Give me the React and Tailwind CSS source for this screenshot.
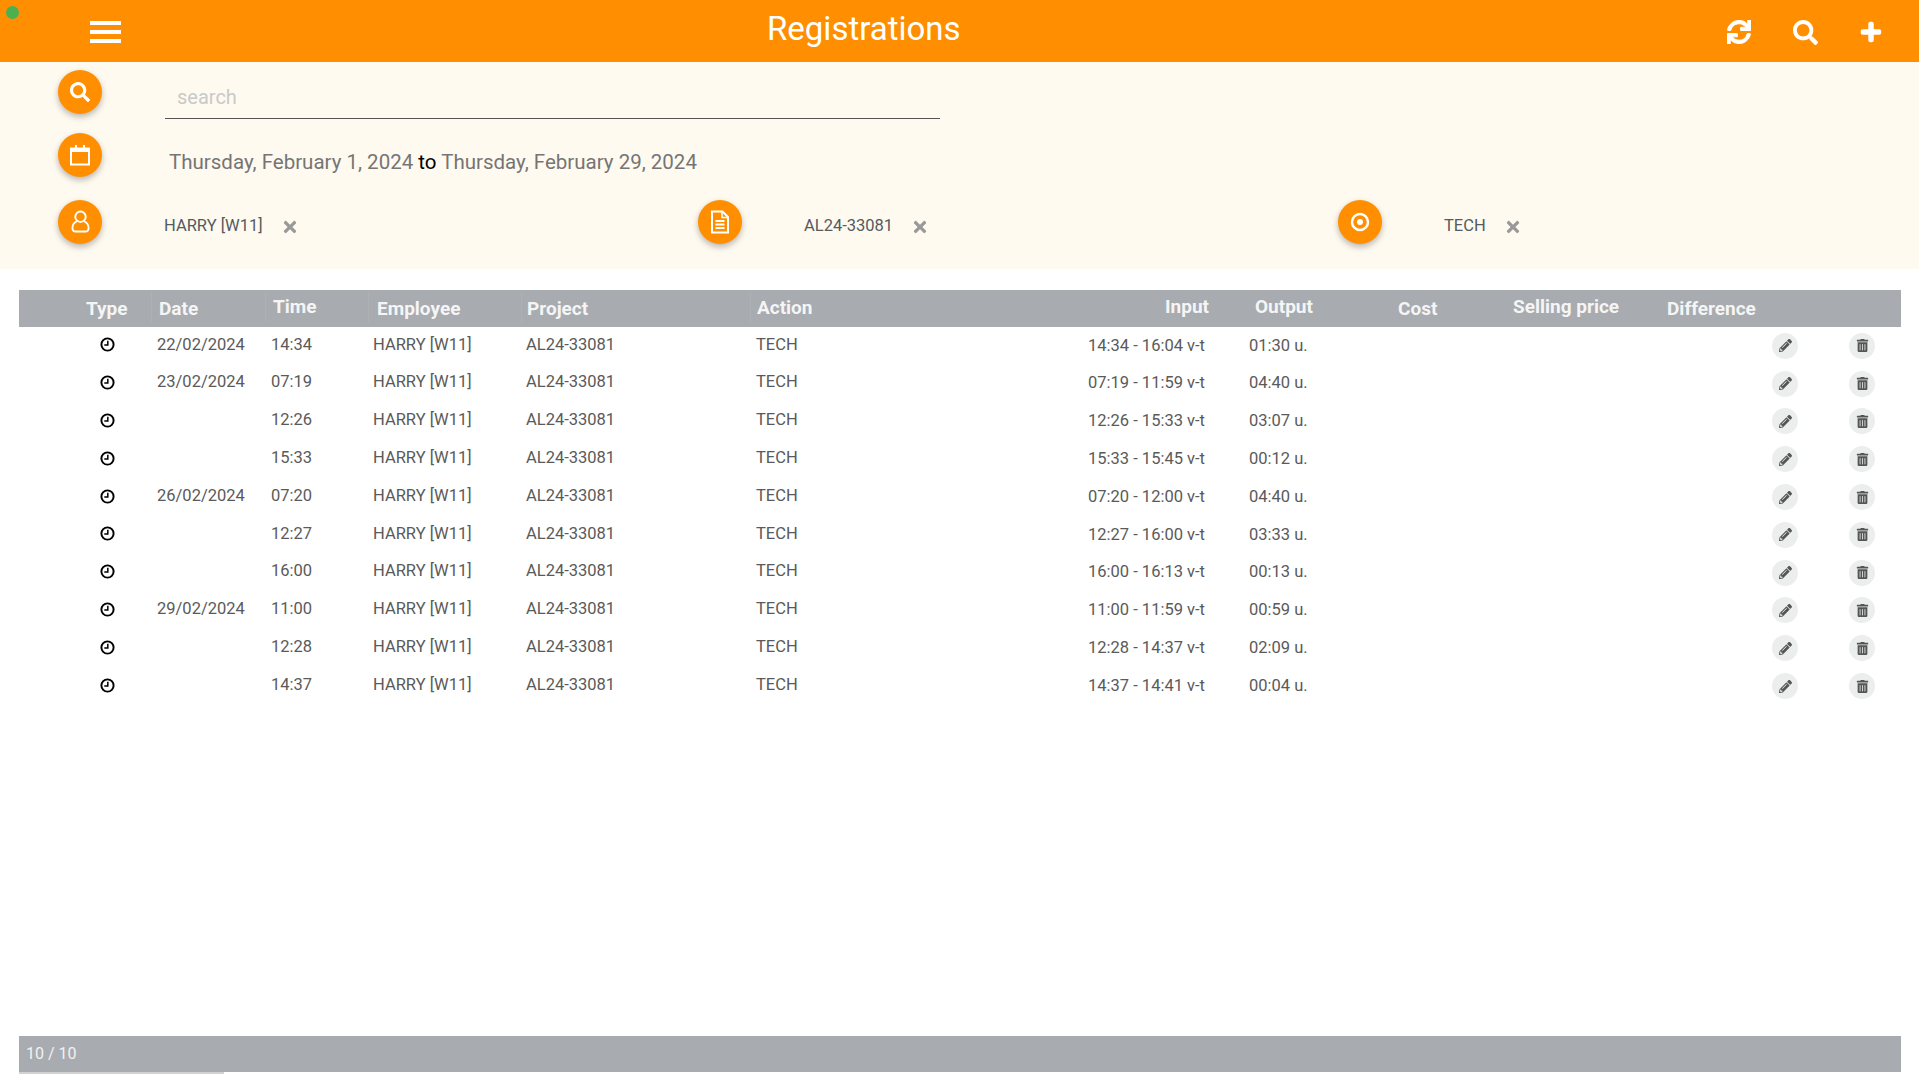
import React from 'react';
import { FaSync, FaSearch, FaPlus, FaTimes, FaPencilAlt, FaTrashAlt } from 'react-icons/fa';

const ROWS = [
    { date: '22/02/2024', time: '14:34', input: '14:34 - 16:04 v-t', output: '01:30 u.' },
    { date: '23/02/2024', time: '07:19', input: '07:19 - 11:59 v-t', output: '04:40 u.' },
    { date: '', time: '12:26', input: '12:26 - 15:33 v-t', output: '03:07 u.' },
    { date: '', time: '15:33', input: '15:33 - 15:45 v-t', output: '00:12 u.' },
    { date: '26/02/2024', time: '07:20', input: '07:20 - 12:00 v-t', output: '04:40 u.' },
    { date: '', time: '12:27', input: '12:27 - 16:00 v-t', output: '03:33 u.' },
    { date: '', time: '16:00', input: '16:00 - 16:13 v-t', output: '00:13 u.' },
    { date: '29/02/2024', time: '11:00', input: '11:00 - 11:59 v-t', output: '00:59 u.' },
    { date: '', time: '12:28', input: '12:28 - 14:37 v-t', output: '02:09 u.' },
    { date: '', time: '14:37', input: '14:37 - 14:41 v-t', output: '00:04 u.' },
];

const COLUMNS = 'grid grid-cols-[132px_114px_103px_153px_229px_250px_212px_168px_120px_150px_110px_60px_81px]';

// Round orange button left of each filter
const FilterBadge = ({ children }) => (
    <div className="flex h-[44px] w-[44px] shrink-0 items-center justify-center rounded-full bg-[#ff8f00] text-white shadow-[0_3px_6px_rgba(0,0,0,0.28)]">
        {children}
    </div>
);

const CalendarIcon = () => (
    <svg width="22" height="22" viewBox="0 0 22 22" fill="none" stroke="white" strokeWidth="2">
        <rect x="2" y="4.5" width="18" height="16" />
        <path d="M2 6.5h18" strokeWidth="3" />
        <path d="M7 1v4M15 1v4" />
    </svg>
);

const UserIcon = () => (
    <svg width="19" height="23" viewBox="0 0 20 24" fill="none" stroke="white" strokeWidth="2">
        <circle cx="10" cy="7" r="5.5" />
        <path d="M6.5 11.5C3.5 13 1.5 15 1.5 18.5c0 2.5 1 4 3.5 4h10c2.5 0 3.5-1.5 3.5-4 0-3.5-2-5.5-5-7" />
    </svg>
);

const FileIcon = () => (
    <svg width="20" height="24" viewBox="0 0 20 24" fill="none" stroke="white" strokeWidth="2">
        <path d="M2 1.5h10.5l5.5 5.5v15.5H2z" />
        <path d="M12 1.5v6h6" strokeWidth="1.5" />
        <path d="M5.5 11h9M5.5 14.5h9M5.5 18h9" />
    </svg>
);

const TargetIcon = () => (
    <svg width="20" height="20" viewBox="0 0 20 20" fill="none" stroke="white">
        <circle cx="10" cy="10" r="8" strokeWidth="2.5" />
        <circle cx="10" cy="10" r="3" fill="white" stroke="none" />
    </svg>
);

const ClockIcon = () => (
    <svg width="15" height="15" viewBox="0 0 14 14" fill="none" stroke="black">
        <circle cx="7" cy="7" r="5.7" strokeWidth="1.8" />
        <path d="M7.3 3.5v4H4" strokeWidth="1.4" />
    </svg>
);

const Chip = ({ label }) => (
    <div className="flex items-center pt-[10px] text-[16.5px] text-[#555b61]">
        <span>{label}</span>
        <FaTimes size={18} className="ml-[18px] text-[#999999]" />
    </div>
);

const FilterChip = ({ icon, label }) => (
    <div className="flex items-center pl-[58px]">
        <FilterBadge>{icon}</FilterBadge>
        <div className="ml-[62px]">
            <Chip label={label} />
        </div>
    </div>
);

const RoundButton = ({ children }) => (
    <div className="flex h-[26px] w-[26px] items-center justify-center rounded-full bg-[#eceded] text-[#555555]">
        {children}
    </div>
);

const App = () => {
    return (
        <div className="relative flex h-screen flex-col overflow-hidden bg-white font-[Roboto,sans-serif]">
            <div className="absolute left-[6px] top-[6px] h-[13px] w-[13px] rounded-full bg-[#4caf50]" />

            {/* Top bar */}
            <header className="flex h-[62px] shrink-0 items-center bg-[#ff8f00] text-white">
                <div className="ml-[90px] flex w-[31px] flex-col gap-[5px] pt-[1px]">
                    <span className="h-[4px] bg-white" />
                    <span className="h-[4px] bg-white" />
                    <span className="h-[4px] bg-white" />
                </div>
                <h1 className="ml-[646px] pb-[4px] text-[33px] font-normal">Registrations</h1>
                <div className="ml-auto mr-[37px] flex items-center gap-[42px] pt-[2px]">
                    <FaSync size={24} stroke="currentColor" strokeWidth={20} />
                    <FaSearch size={25} />
                    <FaPlus size={22} stroke="currentColor" strokeWidth={30} />
                </div>
            </header>

            {/* Filters */}
            <section className="flex h-[207px] shrink-0 flex-col bg-[#fffaf0] pt-[8px]">
                <div className="flex items-start pl-[58px]">
                    <FilterBadge><FaSearch size={20} /></FilterBadge>
                    <div className="ml-[63px] flex h-[49px] w-[775px] items-end border-b border-[#555555] pb-[6px] pl-[12px] text-[20px] text-[#c9c9c9]">
                        search
                    </div>
                </div>
                <div className="mt-[14px] flex items-center pl-[58px]">
                    <FilterBadge><CalendarIcon /></FilterBadge>
                    <p className="ml-[67px] pt-[14px] text-[20.5px] text-[#757575]">
                        Thursday, February 1, 2024 <span className="text-black">to</span> Thursday, February 29, 2024
                    </p>
                </div>
                <div className="mt-[22px] grid grid-cols-[640px_640px_640px]">
                    <FilterChip icon={<UserIcon />} label="HARRY [W11]" />
                    <FilterChip icon={<FileIcon />} label="AL24-33081" />
                    <FilterChip icon={<TargetIcon />} label="TECH" />
                </div>
            </section>

            {/* Table */}
            <main className="ml-[19px] mr-[18px] mt-[21px] flex min-h-0 flex-1 flex-col">
                <div className={`${COLUMNS} h-[37px] shrink-0 items-center bg-[#a8abaf] pb-[2px] text-[19px] font-bold text-[#f5f5f5]`}>
                    <div className="pl-[67px] pt-[3px]">Type</div>
                    <div className="border-l border-[#aeb1b4] pl-[7px] pt-[3px]">Date</div>
                    <div className="border-l border-[#aeb1b4] pl-[7px]">Time</div>
                    <div className="border-l border-[#aeb1b4] pl-[8px] pt-[3px]">Employee</div>
                    <div className="border-l border-[#aeb1b4] pl-[5px] pt-[3px]">Project</div>
                    <div className="border-l border-[#aeb1b4] pl-[6px] pt-[2px]">Action</div>
                    <div className="pr-[3px] text-right">Input</div>
                    <div className="pl-[43px]">Output</div>
                    <div className="pl-[18px] pt-[3px]">Cost</div>
                    <div className="pl-[13px]">Selling price</div>
                    <div className="pl-[17px] pt-[3px]">Difference</div>
                    <div />
                    <div />
                </div>

                <div className="-mt-[1px] min-h-0 flex-1">
                    {ROWS.map((row) => (
                        <div key={row.input} className={`${COLUMNS} h-[37.8px] items-center text-[16.5px] text-[#5a5a5a]`}>
                            <div className="flex justify-center pl-[44px]">
                                <ClockIcon />
                            </div>
                            <div className="pl-[6px]">{row.date}</div>
                            <div className="pl-[6px]">{row.time}</div>
                            <div className="pl-[5px]">HARRY [W11]</div>
                            <div className="pl-[5px]">AL24-33081</div>
                            <div className="pl-[6px]">TECH</div>
                            <div className="pr-[7px] pt-[2px] text-right">{row.input}</div>
                            <div className="pl-[37px] pt-[2px]">{row.output}</div>
                            <div />
                            <div />
                            <div />
                            <div className="pl-[12px] pt-[2px]">
                                <RoundButton><FaPencilAlt size={13} /></RoundButton>
                            </div>
                            <div className="pl-[29px] pt-[2px]">
                                <RoundButton><FaTrashAlt size={13} /></RoundButton>
                            </div>
                        </div>
                    ))}
                </div>

                {/* Pager */}
                <footer className="mb-[7px] h-[36px] shrink-0">
                    <div className="flex h-[36px] items-center bg-[#a8abaf] pl-[7px] text-[16px] text-[#f2f2f2]">10 / 10</div>
                    <div className="h-[2px] w-[205px] bg-[#cfd2d4]" />
                </footer>
            </main>
        </div>
    );
};

export default App;
